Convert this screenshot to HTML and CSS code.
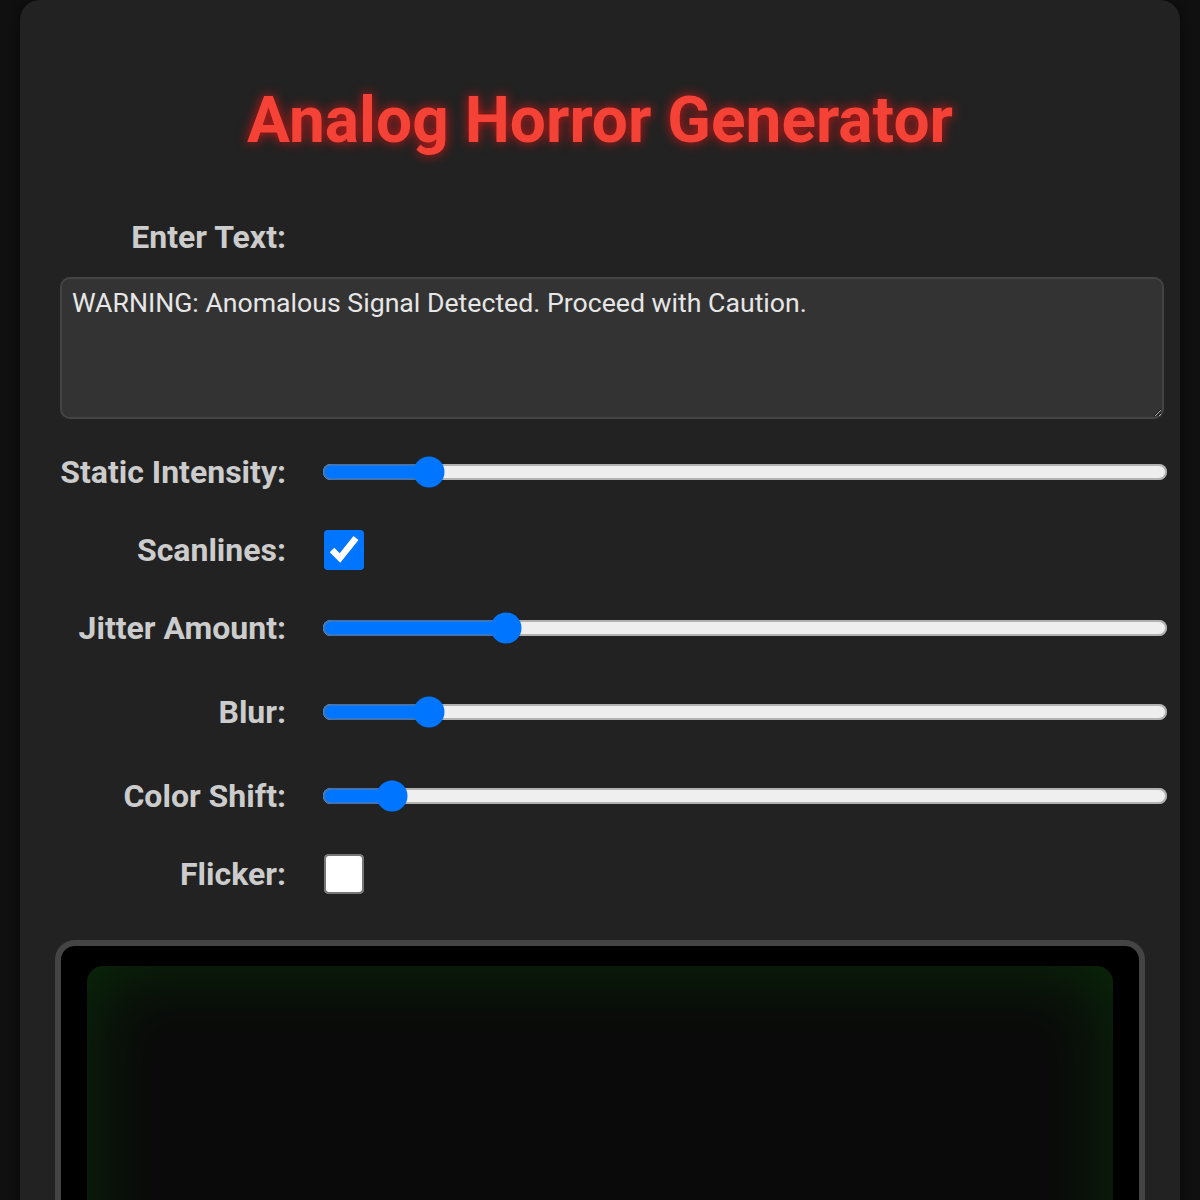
FILE: index.html
```html
<!DOCTYPE html>
<html lang="en">
<head>
<meta charset="utf-8">
<title>Analog Horror Generator</title>
<link rel="stylesheet" href="styles.css">
</head>
<body>
<div class="container">
  <h1 class="title">Analog Horror Generator</h1>
  <label class="label label-block" for="text">Enter Text:</label>
  <textarea id="text" class="text-input">WARNING: Anomalous Signal Detected. Proceed with Caution.</textarea>
  <div class="row row-slider">
    <label class="label" for="static">Static Intensity:</label>
    <input class="slider" type="range" id="static" min="0" max="100" step="any" value="11.15">
  </div>
  <div class="row row-check">
    <label class="label" for="scan">Scanlines:</label>
    <input class="check" type="checkbox" id="scan" checked>
  </div>
  <div class="row row-slider">
    <label class="label" for="jitter">Jitter Amount:</label>
    <input class="slider" type="range" id="jitter" min="0" max="100" step="any" value="20.7">
  </div>
  <div class="row row-slider">
    <label class="label" for="blur">Blur:</label>
    <input class="slider" type="range" id="blur" min="0" max="100" step="any" value="11.15">
  </div>
  <div class="row row-slider">
    <label class="label" for="shift">Color Shift:</label>
    <input class="slider" type="range" id="shift" min="0" max="100" step="any" value="6.65">
  </div>
  <div class="row row-check">
    <label class="label" for="flicker">Flicker:</label>
    <input class="check" type="checkbox" id="flicker">
  </div>
  <div class="monitor">
    <div class="screen"></div>
  </div>
</div>
</body>
</html>
```
FILE: styles.css
```css
html {
  zoom: 2;
  background: #111;
}
body {
  margin: 0;
  padding: 0 10px;
  background: #111;
  font-family: Roboto, "Liberation Sans", sans-serif;
  color: #ccc;
}
.container {
  background: #222;
  border-radius: 10px;
  padding: 20px 40px 20px 20px;
  box-shadow: 0 0 10px rgba(0, 0, 0, 0.6);
  width: 520px;
  margin: 0 auto;
}
.title {
  font-family: Roboto, "Liberation Sans", sans-serif;
  font-size: 32px;
  font-weight: 700;
  text-align: center;
  color: #f44336;
  text-shadow: 0 0 6px rgba(255, 20, 20, 0.8);
  margin: 21.44px 0 30px;
  padding-left: 20px;
}
.label {
  font-size: 16px;
  font-weight: 700;
  color: #ccc;
  width: 113px;
  text-align: right;
  flex: 0 0 auto;
}
.label-block {
  display: block;
  margin-bottom: 10.5px;
}
.text-input {
  display: block;
  box-sizing: border-box;
  width: 552px;
  height: 71px;
  margin: 0 0 10.5px 0;
  padding: 4px 5px;
  background: #333;
  color: #e6e6e6;
  border: 1px solid #444;
  border-radius: 5px;
  font-family: Roboto, "Liberation Sans", sans-serif;
  font-size: 13.33px;
  color-scheme: dark;
}
.row {
  display: flex;
  align-items: center;
  margin-bottom: 10px;
}
.row .label {
  margin-right: 16px;
}
.row-slider {
  height: 32px;
}
.row-check {
  height: 26px;
}
.slider {
  flex: 0 0 auto;
  width: 423px;
  margin: 2px;
}
.check {
  flex: 0 0 auto;
  width: 20px;
  height: 20px;
  margin: 3px;
}
.monitor {
  margin: 20px 0 0 -2.5px;
  width: 513px;
  background: #000;
  border: 3px solid #444;
  border-radius: 10px;
  padding: 10px 13px;
}
.screen {
  height: 400px;
  background: #0a0a0a;
  border-radius: 8px;
  box-shadow: inset 0 0 40px rgba(0, 255, 0, 0.14);
}
```
